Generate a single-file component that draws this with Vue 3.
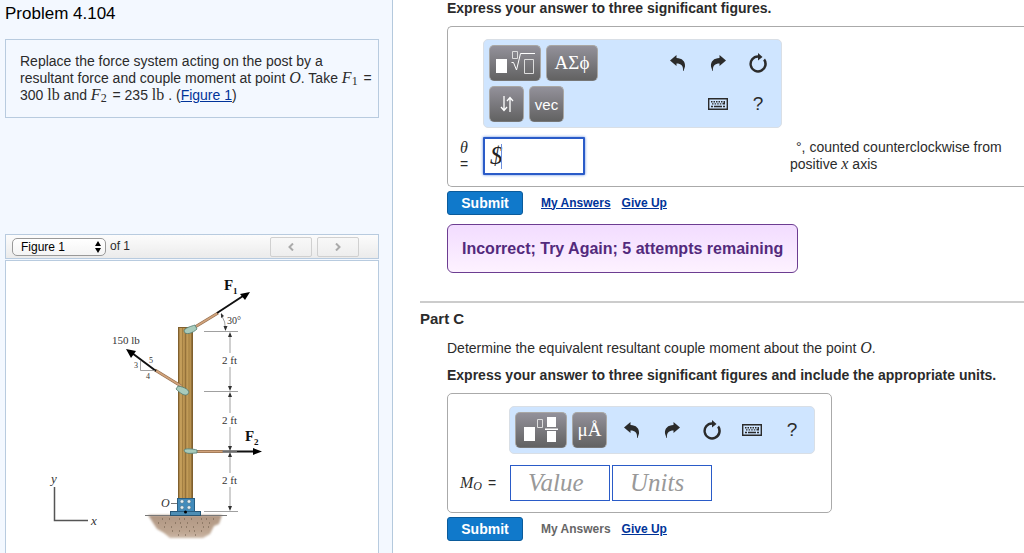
<script setup>
import { ref } from 'vue'

const figure = ref('Figure 1')
const theta = ref('$')
const momentValue = ref('')
const momentUnits = ref('')

const undo = {
  name: 'Undo',
  size: [16, 16],
  d: 'M0 5.5L6.5 0V3C12 3 15.5 6.5 15 11.5L13.5 16H13C13.5 10.5 11 8.5 6.5 8.5V11Z'
}
const redo = {
  name: 'Redo',
  size: [16, 16],
  d: 'M16 5.5L9.5 0V3C4 3 0.5 6.5 1 11.5L2.5 16H3C2.5 10.5 5 8.5 9.5 8.5V11Z'
}
const reset = {
  name: 'Reset',
  size: [18, 20],
  d: 'M9 2.2V0L13.5 4L9 7.4V4.8A6.2 6.2 0 1 0 14.2 7.6L16 5.6A8.7 8.7 0 1 1 9 2.2Z'
}
const keyboard = {
  name: 'Keyboard',
  size: [20, 12],
  d: 'M0 0H20V12H0ZM1.4 1.4V10.6H18.6V1.4ZM3 3h1.5v1.5h-1.5zM5.5 3h1.5v1.5h-1.5zM8 3h1.5v1.5h-1.5zM10.5 3h1.5v1.5h-1.5zM13 3h1.5v1.5h-1.5zM15.5 3h1.5v3.5h-2.5v-1.5h1zM4 5.3h1.5v1.3h-1.5zM6.6 5.3h1.5v1.3h-1.5zM9.2 5.3h1.5v1.3h-1.5zM11.8 5.3h1.5v1.3h-1.5zM3 7.8h2v1.4h-2zM6 7.8h8v1.4h-8zM15 7.8h2v1.4h-2z'
}
const icons = [undo, redo, reset, keyboard]
</script>

<template>
  <div class="page">
    <aside class="problem">
      <h1 class="problem__title">Problem 4.104</h1>
      <div class="problem__text">
        Replace the force system acting on the post by a resultant force and couple moment at point
        <i class="math">O</i>. Take <span class="nowrap"><i class="math">F</i><sub>1</sub> =</span>
        300 <span class="math">lb</span> and <i class="math">F</i><sub>2</sub> = 235
        <span class="math">lb</span> . (<a href="#figure">Figure 1</a>)
      </div>

      <div class="figure-bar">
        <div class="picker">
          <select class="picker__select" v-model="figure" aria-label="Figure">
            <option>Figure 1</option>
          </select>
          <svg class="picker__arrows" width="6" height="12" viewBox="0 0 6 12">
            <path d="M3 0L6 5H0ZM3 12L0 7H6Z" />
          </svg>
        </div>
        <span class="figure-bar__count">of 1</span>
        <div class="figure-bar__nav">
          <button class="nav-btn" disabled aria-label="Previous figure">
            <svg width="6" height="8" viewBox="0 0 6 8"><path d="M5 0.5L1.5 4L5 7.5" /></svg>
          </button>
          <button class="nav-btn" disabled aria-label="Next figure">
            <svg width="6" height="8" viewBox="0 0 6 8"><path d="M1 0.5L4.5 4L1 7.5" /></svg>
          </button>
        </div>
      </div>

      <div class="figure" id="figure">
        <svg class="figure__svg" width="372" height="291" viewBox="6 261 372 291">
          <defs>
            <linearGradient id="wood">
              <stop offset="0" stop-color="#927039" />
              <stop offset="0.15" stop-color="#c6a05c" />
              <stop offset="0.42" stop-color="#b8914f" />
              <stop offset="0.5" stop-color="#94713a" />
              <stop offset="0.6" stop-color="#c19b58" />
              <stop offset="0.85" stop-color="#bd9652" />
              <stop offset="1" stop-color="#6d5025" />
            </linearGradient>
            <linearGradient id="soil" x2="0" y2="1">
              <stop offset="0" stop-color="#b09783" />
              <stop offset="0.75" stop-color="#bea692" />
              <stop offset="1" stop-color="#cdb9a8" />
            </linearGradient>
            <filter id="soft"><feGaussianBlur stdDeviation="1" /></filter>
          </defs>

          <!-- ground -->
          <path
            filter="url(#soft)"
            fill="url(#soil)"
            d="M148 515H222L219 524L214 526L210 534L203 538H170L164 533L157 529L153 523Z"
          />
          <path
            stroke="#695745"
            stroke-width="1"
            stroke-dasharray="1 6 1 9 1 4"
            d="M162 519H216M158 523H214M164 527H210M172 531H204M178 535H196"
          />
          <path stroke="#777" d="M145 515.5H227" />

          <!-- post -->
          <rect x="178.500" y="327.500" width="14" height="171" fill="url(#wood)" stroke="#80602e" />
          <path stroke="#9c783d" stroke-width="0.8" d="M182.500 328V498M189 328V498" />
          <rect x="170.500" y="511.500" width="30" height="4" fill="#4d8eb5" stroke="#275675" />
          <rect x="177.500" y="498.500" width="17" height="13" fill="#428bbb" stroke="#285e82" />
          <g fill="#e4edf2" stroke="#52717f" stroke-width="0.5">
            <circle cx="182" cy="501.500" r="1.800" />
            <circle cx="189" cy="501.500" r="1.800" />
            <circle cx="182" cy="507.500" r="1.800" />
            <circle cx="189" cy="507.500" r="1.800" />
          </g>
          <circle cx="185.500" cy="512" r="1.500" />

          <!-- ropes -->
          <g stroke="#96704f" stroke-width="3">
            <path d="M195 327L218 313M181 386L155 370M197 451.500H223" />
          </g>
          <g stroke="#d1a37c" stroke-width="1.500">
            <path d="M195 327L218 313M181 386L155 370M197 451.500H223" />
          </g>
          <g fill="#a8cbbb" stroke="#527c75" stroke-width="0.8">
            <path d="M184 331C184 328 192 326 195 325L197 329C193 333 185 336 184 331Z" />
            <path d="M188 394C191 390 184 387 178 386L176 389C180 393 185 397 188 394Z" />
            <path d="M184 450C185 448 194 449 197 450V453C192 453 185 455 184 450Z" />
          </g>

          <!-- forces -->
          <g stroke="#111" stroke-width="2">
            <path d="M217 313L243 296M156 371L132 353M223 451.500H254" />
          </g>
          <path d="M250 292L245 300L240 294ZM126 349L136 351L131 358ZM262 451.500L253 455V448Z" />

          <!-- dimensions -->
          <g stroke="#888" stroke-width="0.8" fill="none">
            <path d="M204 331.500H238M204 391.500H238M222 451.500H237M204 511.500H238" />
            <path d="M230 334V353M230 367V388M230 394V413M230 427V449M230 454V473M230 487V508" />
            <path d="M221 314Q226 322 225.500 330M140.500 361V370.500H155" />
          </g>
          <path
            fill="#333"
            d="M230 332l-2 5h4zM230 391l-2 -5h4zM230 392l-2 5h4zM230 451l-2 -5h4zM230 452l-2 5h4zM230 511l-2 -5h4zM225.500 331l-2 -5h4zM221 313l0 5l3 -2z"
          />
          <path stroke="#555" stroke-width="1.500" fill="none" d="M54.500 487V520.500H88" />
          <path stroke="#777" d="M171 503.500H177" />

          <g class="figure__labels">
            <text x="112" y="344">150 lb</text>
            <text x="227" y="324" font-size="10">30°</text>
            <text x="222" y="364">2 ft</text>
            <text x="222" y="424">2 ft</text>
            <text x="222" y="484">2 ft</text>
            <text x="149" y="363" font-size="8">5</text>
            <text x="134" y="368" font-size="8">3</text>
            <text x="146" y="379" font-size="8">4</text>
            <text x="51" y="483" font-size="13" font-style="italic">y</text>
            <text x="91" y="525" font-size="13" font-style="italic">x</text>
            <text x="161" y="507" font-size="12" font-style="italic">O</text>
            <g fill="#111" font-weight="bold">
              <text x="224" y="290" font-size="15">F</text>
              <text x="233" y="294" font-size="9">1</text>
              <text x="245" y="441" font-size="15">F</text>
              <text x="254" y="445" font-size="9">2</text>
            </g>
          </g>
        </svg>
      </div>
    </aside>

    <main class="work">
      <section class="part">
        <p class="part__hint part__hint--first">Express your answer to three significant figures.</p>
        <div class="answer answer--wide">
          <div class="toolbar toolbar--tall">
            <div class="toolbar__keys">
              <button class="key key--wide" aria-label="Templates">
                <svg width="40" height="24" viewBox="0 0 40 24" fill="none" stroke="#fff">
                  <path fill="#fff" stroke="none" d="M1 8H12V22H1Z" />
                  <path stroke="#ddd" d="M17.500 0.500H22.500V7.500H17.500Z" />
                  <path d="M16.500 11.500H18.500L21.500 19L25.500 2.500H40" />
                  <path stroke="#ddd" d="M29.500 8.500H38.500V22.500H29.500Z" />
                </svg>
              </button>
              <button class="key key--wide key--greek">ΑΣϕ</button>
              <button class="key" aria-label="Arrows">
                <svg width="14" height="16" viewBox="0 0 14 16" fill="none" stroke="#fff">
                  <path stroke-width="1.300" d="M4 0V14M1 11L4 14.500L7 11M10 16V2M7 5L10 1.500L13 5" />
                </svg>
              </button>
              <button class="key">vec</button>
            </div>
            <div class="toolbar__icons toolbar__icons--tall">
              <button
                v-for="icon in icons"
                :key="icon.name"
                class="tool"
                :class="'tool--' + icon.name.toLowerCase()"
                :aria-label="icon.name"
              >
                <svg
                  :width="icon.size[0]"
                  :height="icon.size[1]"
                  :viewBox="`0 0 ${icon.size[0]} ${icon.size[1]}`"
                >
                  <path fill-rule="evenodd" :d="icon.d" />
                </svg>
              </button>
              <button class="tool tool--help">?</button>
            </div>
          </div>

          <div class="field-row">
            <label class="theta-label" for="theta"><i class="math">θ</i><span>=</span></label>
            <div class="entry">
              <input class="entry__input" id="theta" type="text" v-model="theta" />
              <span class="entry__caret"></span>
            </div>
            <div class="field-row__unit">
              <span class="degree">°</span>, counted counterclockwise from positive
              <i class="math">x</i> axis
            </div>
          </div>
        </div>

        <div class="actions">
          <button class="submit">Submit</button>
          <a href="#answers">My Answers</a>
          <a href="#give-up">Give Up</a>
        </div>
        <p class="feedback">Incorrect; Try Again; 5 attempts remaining</p>
      </section>

      <section class="part part--c">
        <h2 class="part__title">Part C</h2>
        <p class="part__question">
          Determine the equivalent resultant couple moment about the point <i class="math">O</i>.
        </p>
        <p class="part__hint">
          Express your answer to three significant figures and include the appropriate units.
        </p>
        <div class="answer answer--units">
          <div class="toolbar">
            <div class="toolbar__keys">
              <button class="key key--wide" aria-label="Templates">
                <svg width="36" height="28" viewBox="0 0 36 28">
                  <path fill="#fff" d="M1 11H12V25H1ZM24 1H33V11H24ZM24 15H33V26H24ZM22 12.500H35V14H22Z" />
                  <path fill="none" stroke="#ddd" d="M14.500 3.500H19.500V11.500H14.500Z" />
                </svg>
              </button>
              <button class="key key--greek">μÅ</button>
            </div>
            <div class="toolbar__icons">
              <button v-for="icon in icons" :key="icon.name" class="tool" :aria-label="icon.name">
                <svg
                  :width="icon.size[0]"
                  :height="icon.size[1]"
                  :viewBox="`0 0 ${icon.size[0]} ${icon.size[1]}`"
                >
                  <path fill-rule="evenodd" :d="icon.d" />
                </svg>
              </button>
              <button class="tool tool--help">?</button>
            </div>
          </div>

          <div class="moment-row">
            <label class="moment-row__label" for="moment">
              <i class="math">M</i><sub><i>O</i></sub> =
            </label>
            <input
              class="moment-row__input"
              id="moment"
              type="text"
              placeholder="Value"
              v-model="momentValue"
            />
            <input
              class="moment-row__input"
              type="text"
              placeholder="Units"
              aria-label="Units"
              v-model="momentUnits"
            />
          </div>
        </div>

        <div class="actions">
          <button class="submit">Submit</button>
          <span class="actions__off">My Answers</span>
          <a href="#give-up">Give Up</a>
        </div>
      </section>
    </main>
  </div>
</template>

<style>
body {
  overflow: hidden;
}
</style>

<style scoped>
.page {
  display: grid;
  grid-template-columns: 393fr 631fr;
  min-height: 100vh;
  box-sizing: border-box;
  font-family: 'Liberation Sans', Arial, sans-serif;
  font-size: 14px;
  line-height: 17px;
  color: #2b2b2b;
  background: #fff;
}
.page * {
  box-sizing: border-box;
}
button {
  font-family: inherit;
  padding: 0;
  cursor: pointer;
}
a {
  color: #039;
}
.math,
sub {
  font-family: 'Liberation Serif', serif;
  font-size: 16px;
  line-height: 1px;
}
sub {
  margin-right: 2px;
  font-size: 12px;
  vertical-align: -2px;
}
.nowrap {
  white-space: nowrap;
}

.problem {
  display: flex;
  flex-direction: column;
  padding: 4px 13px 0 5px;
  background: #f3f8ff;
  border-right: 1px solid #b4c9dd;
}
.problem__title {
  margin: 0 0 15px;
  font-size: 17px;
  line-height: 20px;
  font-weight: normal;
  color: #000;
}
.problem__text {
  min-height: 79px;
  padding: 13px 2px 12px 14px;
  border: 1px solid #b8cbdf;
}
.figure-bar {
  display: flex;
  align-items: center;
  height: 25px;
  margin-top: 116px;
  padding: 0 19px 0 6px;
  border: 1px solid #b8cbdf;
  background: linear-gradient(#fcfcfc, #ebebeb);
}
.picker {
  position: relative;
}
.picker__select {
  display: block;
  width: 94px;
  height: 18px;
  padding: 0 8px;
  appearance: none;
  font-family: inherit;
  font-size: 12px;
  color: #000;
  background: linear-gradient(#fff, #f4f4f4);
  border: 1px solid #999;
  border-radius: 5px;
}
.picker__arrows {
  position: absolute;
  top: 3px;
  right: 5px;
  pointer-events: none;
}
.figure-bar__count {
  margin-left: 4px;
  font-size: 12px;
}
.figure-bar__nav {
  display: flex;
  gap: 5px;
  margin-left: auto;
}
.nav-btn {
  display: flex;
  align-items: center;
  justify-content: center;
  width: 42px;
  height: 20px;
  background: linear-gradient(#f8f8f8, #eee);
  border: 1px solid #d0d0d0;
  border-radius: 2px;
}
.nav-btn path {
  fill: none;
  stroke: #aaa;
  stroke-width: 2;
}
.figure {
  flex: 1;
  margin-top: 1px;
  background: #fff;
  border: 1px solid #b8cbdf;
  border-bottom: none;
}
.figure__svg {
  display: block;
  max-width: 100%;
}
.figure__labels {
  font-family: 'Liberation Serif', serif;
  font-size: 11px;
  fill: #333;
}

.work {
  min-width: 0;
}
.part {
  padding-left: 54px;
}
.part__hint {
  margin: 0 0 9px;
  font-weight: bold;
}
.answer {
  border: 1px solid #aaa;
  border-radius: 5px;
}
.answer--wide {
  padding: 12px 0 11px 12px;
  border-right: none;
  border-radius: 5px 0 0 5px;
}
.toolbar {
  display: flex;
  justify-content: space-between;
  width: 306px;
  margin-left: 49px;
  padding: 5px 2px 5px 5px;
  background: #cfe5ff;
  border: 1px solid #d9dfe6;
  border-radius: 5px;
}
.toolbar--tall {
  width: 299px;
  margin-left: 23px;
  padding-right: 3px;
}
.toolbar__keys {
  display: flex;
  flex-wrap: wrap;
  gap: 5px;
  max-width: 120px;
}
.key {
  display: flex;
  align-items: center;
  justify-content: center;
  width: 35px;
  height: 36px;
  color: #fff;
  font-size: 15px;
  background: linear-gradient(#93919a, #626262);
  border: 1px solid #a9a7a4;
  border-bottom-color: #777;
  border-radius: 5px;
}
.key--wide {
  width: 52px;
}
.key--greek {
  font-family: 'Liberation Serif', serif;
  font-size: 19px;
}
.toolbar__icons {
  display: grid;
  grid-template-columns: repeat(5, 40px);
}
.toolbar__icons--tall {
  grid-template-columns: repeat(3, 40px);
  row-gap: 5px;
}
.tool {
  display: flex;
  align-items: center;
  justify-content: center;
  height: 36px;
  background: none;
  border: none;
  color: #2b2b2b;
}
.tool path {
  fill: #2b2b2b;
}
.toolbar__icons--tall .tool--keyboard {
  grid-column: 2;
}
.tool--help {
  font-size: 19px;
}
.field-row {
  display: flex;
  align-items: center;
  margin-top: 9px;
}
.theta-label {
  display: flex;
  flex-direction: column;
  width: 23px;
}
.theta-label .math {
  line-height: 17px;
}
.entry {
  position: relative;
}
.entry__input {
  display: block;
  width: 102px;
  height: 38px;
  padding: 0 5px;
  outline: none;
  font-family: 'Liberation Serif', serif;
  font-style: italic;
  font-size: 25px;
  color: #222;
  border: 2px solid #2a5bc8;
  border-radius: 1px;
  box-shadow: 0 0 3px #5c88e0;
}
.entry__caret {
  position: absolute;
  top: 7px;
  left: 18px;
  width: 1px;
  height: 25px;
  background: #6d8fdd;
}
.field-row__unit {
  flex: 1;
  margin-left: 205px;
  padding-right: 12px;
}
.degree {
  margin-left: 6px;
}
.actions {
  display: flex;
  align-items: center;
  gap: 11px;
  margin-top: 4px;
  font-size: 12px;
  font-weight: bold;
}
.actions__off {
  color: #666;
}
.submit {
  width: 76px;
  height: 24px;
  margin-right: 7px;
  color: #fff;
  font-size: 14px;
  font-weight: bold;
  background: #1079cb;
  border: 1px solid #0b5b9b;
  border-radius: 3px;
}
.feedback {
  width: fit-content;
  margin: 9px 0 0;
  padding: 14px;
  font-size: 16px;
  line-height: 19px;
  font-weight: bold;
  color: #532a7c;
  background: linear-gradient(#f2dcff, #fdf2ff);
  border: 1px solid #6c3d91;
  border-radius: 6px;
}
.part--c {
  margin: 28px 0 0 27px;
  padding: 7px 0 0 27px;
  border-top: 2px solid #ccc;
}
.part__title {
  margin: 0 0 12px -27px;
  font-size: 15px;
  line-height: 18px;
}
.part__question {
  margin: 0 0 10px;
}
.answer--units {
  width: fit-content;
  padding: 12px 16px 11px 12px;
}
.moment-row {
  display: flex;
  align-items: center;
  gap: 2px;
  margin-top: 11px;
}
.moment-row__label {
  width: 48px;
}
.moment-row__input {
  width: 100px;
  height: 36px;
  padding: 0 17px;
  font-family: 'Liberation Serif', serif;
  font-style: italic;
  font-size: 25px;
  color: #222;
  border: 1px solid #2a5bc8;
  border-radius: 0;
}
.moment-row__input::placeholder {
  color: #999;
}
</style>
